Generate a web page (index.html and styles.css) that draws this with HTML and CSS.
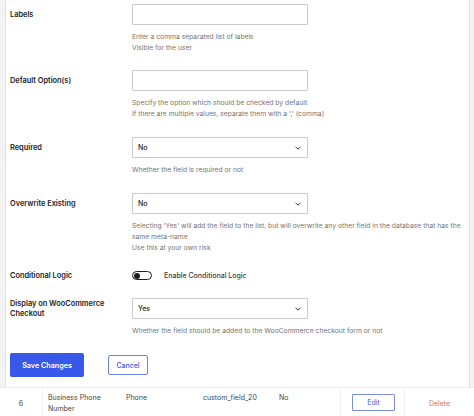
FILE: index.html
```html
<!DOCTYPE html>
<html>
<head>
<meta charset="utf-8">
<link rel="stylesheet" href="styles.css">
</head>
<body>
<div class="panel">
  <div class="row">
    <div class="label">Labels</div>
    <div class="field">
      <div class="input"></div>
      <div class="help">Enter a comma separated list of labels<br>Visible for the user</div>
    </div>
  </div>
  <div class="row">
    <div class="label">Default Option(s)</div>
    <div class="field">
      <div class="input"></div>
      <div class="help">Specify the option which should be checked by default<br>If there are multiple values, separate them with a ',' (comma)</div>
    </div>
  </div>
  <div class="row">
    <div class="label">Required</div>
    <div class="field">
      <div class="input select"><span>No</span><svg class="chev" width="6" height="4" viewBox="0 0 6 4"><path d="M0.5 0.7 L3 3.2 L5.5 0.7" fill="none" stroke="#1e1e1e" stroke-width="0.9"/></svg></div>
      <div class="help">Whether the field is required or not</div>
    </div>
  </div>
  <div class="row">
    <div class="label">Overwrite Existing</div>
    <div class="field">
      <div class="input select"><span>No</span><svg class="chev" width="6" height="4" viewBox="0 0 6 4"><path d="M0.5 0.7 L3 3.2 L5.5 0.7" fill="none" stroke="#1e1e1e" stroke-width="0.9"/></svg></div>
      <div class="help">Selecting 'Yes' will add the field to the list, but will overwrite any other field in the database that has the same meta-name<br>Use this at your own risk</div>
    </div>
  </div>
  <div class="row row-toggle">
    <div class="label">Conditional Logic</div>
    <div class="field toggle-field">
      <span class="toggle"><span class="knob"></span></span>
      <span class="toggle-text">Enable Conditional Logic</span>
    </div>
  </div>
  <div class="row">
    <div class="label">Display on WooCommerce Checkout</div>
    <div class="field">
      <div class="input select"><span>Yes</span><svg class="chev" width="6" height="4" viewBox="0 0 6 4"><path d="M0.5 0.7 L3 3.2 L5.5 0.7" fill="none" stroke="#1e1e1e" stroke-width="0.9"/></svg></div>
      <div class="help">Whether the field should be added to the WooCommerce checkout form or not</div>
    </div>
  </div>
  <div class="actions">
    <button class="btn-primary">Save Changes</button>
    <button class="btn-secondary">Cancel</button>
  </div>
</div>
<div class="table-row">
  <div class="cell c-num">6</div>
  <div class="cell c-name">Business Phone<br>Number</div>
  <div class="cell c-type">Phone</div>
  <div class="cell c-meta">custom_field_20</div>
  <div class="cell c-req">No</div>
  <div class="cell c-edit"><button class="btn-edit">Edit</button></div>
  <div class="cell c-del">Delete</div>
</div>
</body>
</html>
```

FILE: styles.css
```css
* { box-sizing: border-box; }
html, body {
  margin: 0;
  padding: 0;
  background: #f3f3f4;
  font-family: Inter, "Noto Sans", sans-serif;
  color: #1e1e1e;
}
body { width: 474px; height: 416px; overflow: hidden; }

.panel {
  margin-left: 5px;
  width: 465px;
  background: #fff;
  border-left: 1px solid #e2e2e2;
  border-right: 1px solid #e2e2e2;
  padding: 4px 0 10px 4px;
}

.row {
  display: grid;
  grid-template-columns: 122px 1fr;
  align-items: start;
  margin-bottom: 17px;
}
.row:nth-child(2), .row:nth-child(3) { margin-bottom: 18px; }

.label {
  font-size: 7.4px;
  font-weight: 600;
  line-height: 9.5px;
  min-height: 21px;
  display: flex;
  align-items: center;
  padding-right: 10px;
}

.input {
  height: 21px;
  width: 176px;
  border: 1px solid #c9c9c9;
  border-radius: 1px;
  background: #fff;
}
.select {
  display: flex;
  align-items: center;
  justify-content: space-between;
  padding: 0 6px 0 5px;
  font-size: 7px;
  font-weight: 500;
}
.chev { display: block; }

.help {
  margin-top: 6px;
  font-size: 6.75px;
  line-height: 11px;
  color: #757575;
  padding-right: 4px;
}

.row-toggle { margin-top: -5px; margin-bottom: 12px; }
.toggle-field {
  display: flex;
  align-items: center;
  height: 21px;
}
.toggle {
  width: 20px;
  height: 9px;
  border: 1px solid #1e1e1e;
  border-radius: 5px;
  display: inline-flex;
  align-items: center;
  padding-left: 1px;
}
.knob {
  width: 6px;
  height: 6px;
  border-radius: 50%;
  background: #1e1e1e;
}
.toggle-text {
  margin-left: 12px;
  font-size: 7px;
  font-weight: 500;
  color: #3c3c3c;
}

.actions {
  display: flex;
  align-items: center;
  gap: 24px;
  margin-top: 1px;
}
.btn-primary {
  width: 74px;
  height: 24px;
  background: #3858e9;
  color: #fff;
  border: none;
  border-radius: 2px;
  font-family: inherit;
  font-size: 7.2px;
  font-weight: 600;
  padding: 0;
}
.btn-secondary {
  width: 40px;
  height: 20px;
  background: #fff;
  color: #3858e9;
  border: 1px solid #6e82ea;
  border-radius: 2px;
  font-family: inherit;
  font-size: 7px;
  font-weight: 500;
  padding: 0;
}

.table-row {
  display: grid;
  grid-template-columns: 43px 78px 77px 76px 67px 64px 69px;
  height: 40px;
  background: #fff;
  border-top: 1px solid #ececec;
  font-size: 7px;
  line-height: 11px;
  color: #444;
}
.cell { padding-top: 4px; }
.c-num { text-align: center; padding-top: 10px; border-right: 1px solid #f1f1f1; }
.c-name { padding-left: 5px; }
.c-type { padding-left: 5px; }
.c-meta { padding-left: 5px; }
.c-req { padding-left: 5px; border-right: 1px solid #f1f1f1; }
.c-edit { padding-left: 11px; padding-top: 6px; border-right: 1px solid #f1f1f1; }
.btn-edit {
  width: 43px;
  height: 17px;
  background: #fff;
  border: 1px solid #7b8de6;
  border-radius: 1px;
  color: #3858e9;
  font-family: inherit;
  font-size: 7px;
  padding: 0;
}
.c-del { text-align: center; color: #e06c6c; padding-top: 10px; }
```
